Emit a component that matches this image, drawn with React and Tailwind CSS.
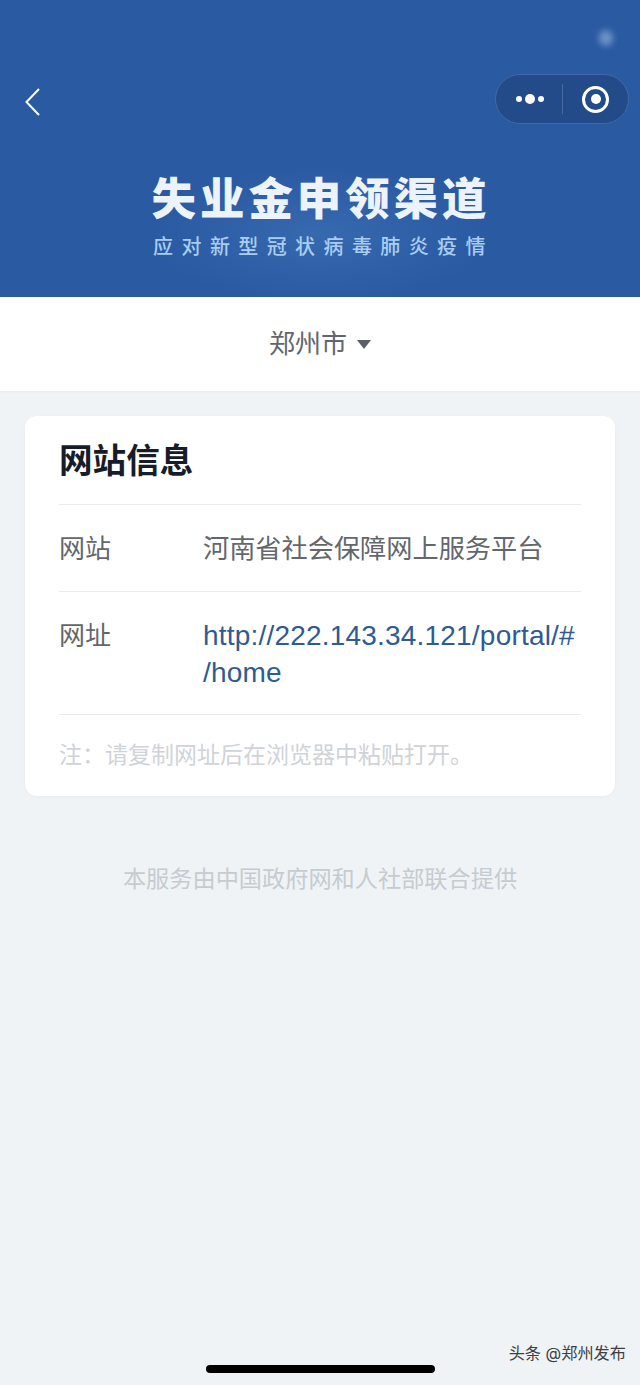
import React from 'react'

const CJK = "font-['Inter','Noto_Sans_CJK_SC',sans-serif]"

function Capsule() {
  return (
    <div className="w-[134px] h-[50px] rounded-full bg-[#234b89] border border-[#4268a6] flex items-center">
      <div className="w-[66px] flex items-center justify-center gap-[3px] pl-[2px]">
        <span className="w-[6px] h-[6px] rounded-full bg-white" />
        <span className="w-[10px] h-[10px] rounded-full bg-white" />
        <span className="w-[6px] h-[6px] rounded-full bg-white" />
      </div>
      <div className="w-px h-[30px] bg-[#46699f]" />
      <div className="flex-1 flex items-center justify-center">
        <div className="w-[27px] h-[27px] rounded-full border-[3px] border-white flex items-center justify-center">
          <span className="w-[10px] h-[10px] rounded-full bg-white" />
        </div>
      </div>
    </div>
  )
}

function Row({ label, children }) {
  return (
    <div className="flex border-b border-[#e9ecef]">
      <div className="w-[144px] shrink-0 text-[26px] text-[#63676c]">{label}</div>
      {children}
    </div>
  )
}

export default function App() {
  return (
    <div className={`relative w-[640px] h-[1385px] overflow-hidden bg-[#eff3f6] ${CJK}`}>
      <div className="h-[297px] bg-[#2a5aa2] bg-[radial-gradient(ellipse_170px_70px_at_50%_235px,#3769af,#2a5aa2)] flex flex-col">
        <div className="h-[74px] flex justify-end items-start pt-[30px] pr-[27px]">
          <div className="w-[14px] h-[16px] rounded-full bg-[#6d93c6] blur-[3px]" />
        </div>
        <div className="flex items-center justify-between pl-[24px] pr-[11px]">
          <svg className="mt-[6px]" width="18" height="28" viewBox="0 0 18 28" fill="none" stroke="white" strokeWidth="2">
            <path d="M15 1 2.5 14 15 27" />
          </svg>
          <Capsule />
        </div>
        <div className="mt-[50px] flex flex-col items-center">
          <div className="text-[44.5px] leading-[50px] font-black tracking-[3.9px] pl-[2px] text-[#edf3fa]">失业金申领渠道</div>
          <div className="mt-[9px] text-[20px] leading-[28px] font-medium tracking-[8.4px] pl-[7px] text-[#a9cdf2]">应对新型冠状病毒肺炎疫情</div>
        </div>
      </div>

      <div className="h-[94px] bg-white flex items-center justify-center gap-[10px] shadow-[0_1px_3px_rgba(0,0,0,0.04)]">
        <span className="text-[26px] text-[#63666c] -translate-y-[1px]">郑州市</span>
        <span className="w-0 h-0 border-x-[7px] border-x-transparent border-t-[9px] border-t-[#5c5f66]" />
      </div>

      <div className="mt-[25px] mx-[25px] h-[380px] bg-white rounded-[12px] px-[34px] shadow-[0_1px_4px_rgba(0,0,0,0.03)]">
        <div className="h-[89px] pt-[3px] flex items-center border-b border-[#e9ecef] text-[33.6px] font-bold text-[#171c2b]">网站信息</div>
        <Row label={<div className="pt-[2px] leading-[84px]">网站</div>}>
          <div className="pt-[2px] text-[26.2px] leading-[84px] text-[#63676c]">河南省社会保障网上服务平台</div>
        </Row>
        <Row label={<div className="pt-[26px] leading-[36px]">网址</div>}>
          <div className="pt-[25px] pb-[23px] font-['Liberation_Sans',sans-serif] text-[28px] leading-[37px] tracking-[0.2px] text-[#2f5a92] whitespace-nowrap">
            http://222.143.34.121/portal/#
            <br />
            /home
          </div>
        </Row>
        <div className="h-[80px] flex items-center text-[23px] text-[#d0d3d7]">注：请复制网址后在浏览器中粘贴打开。</div>
      </div>

      <div className="mt-[65px] text-center text-[23.2px] leading-[36px] text-[#c6cbd0]">本服务由中国政府网和人社部联合提供</div>

      <div className="absolute left-[206px] bottom-[12px] w-[229px] h-[8px] rounded-full bg-black" />
      <div className="absolute right-[14px] bottom-[21px] text-[16.2px] leading-[22px] text-[#3c3f44]">头条 @郑州发布</div>
    </div>
  )
}
